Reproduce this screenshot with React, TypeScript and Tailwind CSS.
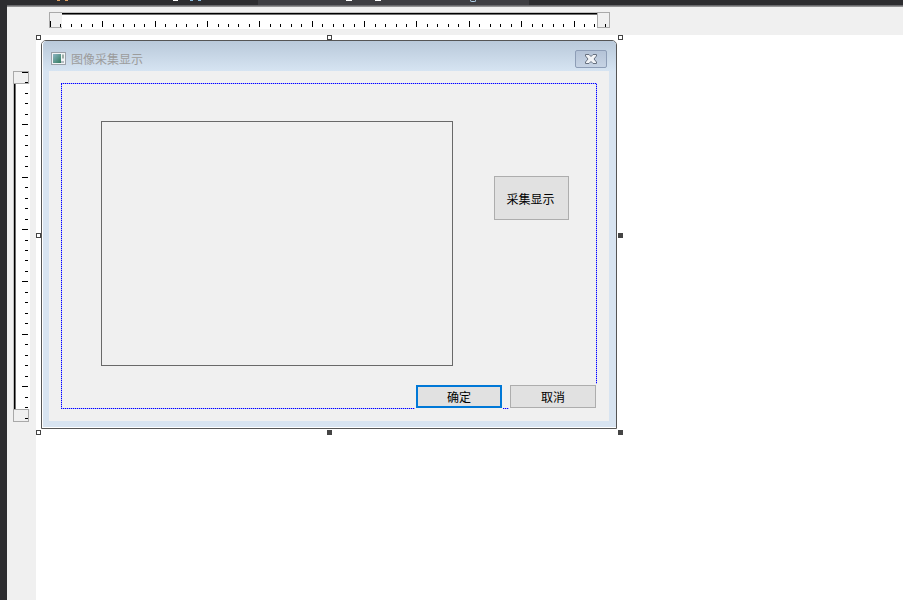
const FONT = "font-['Noto_Sans_CJK_SC','Noto_Sans',sans-serif]";

function HTicks() {
  const ticks = Array.from({ length: 54 }, (_, i) => i);
  return (
    <svg className="absolute left-0 top-0" width="561" height="17" shapeRendering="crispEdges">
      {ticks.map((i) => {
        const x = Math.round(1 + i * 10.47) + 0.5;
        return <line key={i} x1={x} x2={x} y1={i % 5 === 0 ? 9 : 12} y2={15} stroke="#000" strokeWidth="1" />;
      })}
    </svg>
  );
}

function VTicks() {
  const ticks = Array.from({ length: 34 }, (_, i) => i);
  return (
    <svg className="absolute left-0 top-0" width="17" height="351" shapeRendering="crispEdges">
      {ticks.map((i) => {
        const y = Math.round(1 + i * 10.47) + 0.5;
        return <line key={i} x1={i % 5 === 0 ? 9 : 12} x2={15} y1={y} y2={y} stroke="#000" strokeWidth="1" />;
      })}
    </svg>
  );
}

function TitleIcon() {
  return (
    <svg width="15" height="13" viewBox="0 0 15 13" className="mt-[11px] shrink-0">
      <defs>
        <linearGradient id="ti" x1="0" y1="0" x2="1" y2="1">
          <stop offset="0" stopColor="#8fb6c4" />
          <stop offset="1" stopColor="#2f7a5e" />
        </linearGradient>
      </defs>
      <rect x="0.5" y="0.5" width="14" height="12" fill="#f2f4f6" stroke="#9aa0a8" />
      <rect x="2" y="2" width="8" height="9" fill="url(#ti)" />
      <rect x="11.5" y="2.5" width="1" height="4" fill="#4a6a5a" />
      <rect x="10" y="9" width="3" height="2" fill="#b4bcc2" />
    </svg>
  );
}

function CloseIcon() {
  return (
    <svg width="14" height="12" viewBox="0 0 14 12">
      <path
        d="M1.5 1.5H5L7 3.5L9 1.5H12.5V3L10 6L12.5 9V10.5H9L7 8.5L5 10.5H1.5V9L4 6L1.5 3Z"
        fill="#f1f3f6"
        stroke="#66707f"
        strokeWidth="1"
      />
    </svg>
  );
}

export default function App() {
  return (
    <div className={`flex h-[600px] w-[903px] flex-col overflow-hidden bg-white ${FONT}`}>
      {/* top window bar */}
      <div className="relative flex h-[5px] shrink-0">
        <div className="w-[258px] bg-[#2d2d30]" />
        <div className="w-[271px] bg-[#3e3e42]" />
        <div className="flex-1 bg-[#2d2d30]" />
        <span className="absolute left-[57px] top-0 h-[1px] w-[3px] bg-[#e0a060]" />
        <span className="absolute left-[65px] top-0 h-[1px] w-[3px] bg-[#e0a060]" />
        <span className="absolute left-[173px] top-0 h-[1px] w-[5px] bg-white" />
        <span className="absolute left-[190px] top-0 h-[1px] w-[3px] bg-[#90c0e0]" />
        <span className="absolute left-[198px] top-0 h-[1px] w-[3px] bg-[#90c0e0]" />
        <span className="absolute left-[346px] top-0 h-[1px] w-[6px] bg-white" />
        <span className="absolute left-[375px] top-0 h-[1px] w-[6px] bg-white" />
        <span className="absolute left-[470px] top-0 h-[2px] w-[6px] rounded-b-full border-x border-b border-[#b0d0e8]" />
      </div>

      <div className="flex min-h-0 flex-1">
        <div className="w-[7px] shrink-0 bg-[#2d2d30]" />
        <div className="flex min-w-0 flex-1 flex-col">
          <div className="h-[2px] shrink-0 bg-gradient-to-b from-[#56565a] to-[#a8a8a8]" />

          {/* horizontal ruler strip */}
          <div className="h-[28px] shrink-0 bg-[#f0f0f0] pl-[42px] pt-[5px]">
            <div className="relative flex h-[17px] w-[561px]">
              <div className="h-[16px] w-[13px] border-y border-l border-[#a9a9a9] bg-[#f0f0f0]" />
              <div className="flex-1 border-t border-[#c0c0c0] bg-white">
                <div className="h-px bg-black" />
                <div className="h-px bg-[#707070]" />
              </div>
              <div className="h-[16px] w-[13px] border border-[#a9a9a9] bg-[#f0f0f0]" />
              <HTicks />
            </div>
          </div>

          <div className="flex min-h-0 flex-1">
            {/* vertical ruler column */}
            <div className="w-[29px] shrink-0 bg-[#f0f0f0] pl-[6px] pt-[36px]">
              <div className="relative flex h-[351px] w-[17px] flex-col">
                <div className="h-[13px] w-[16px] border border-[#a9a9a9] bg-[#f0f0f0]" />
                <div className="flex flex-1 bg-white">
                  <div className="w-px bg-[#c0c0c0]" />
                  <div className="w-px bg-black" />
                  <div className="w-px bg-[#707070]" />
                </div>
                <div className="h-[13px] w-[16px] border border-[#a9a9a9] bg-[#f0f0f0]" />
                <VTicks />
              </div>
            </div>

            {/* design canvas */}
            <div className="relative min-w-0 flex-1 bg-white pl-[5px] pt-[5px]">
              <div className="h-[389px] w-[576px] rounded-t-[5px] border border-[#555555]">
                <div className="flex h-full flex-col rounded-t-[4px] border-b border-l border-white bg-gradient-to-b from-[#b9c9da] to-[#d6e4f2] bg-[length:100%_30px] bg-no-repeat">
                  <div className="flex h-[30px] shrink-0 pl-2 pr-[9px]">
                    <TitleIcon />
                    <span className="ml-[5px] mt-[11px] text-[12px] leading-[14px] text-[#9c9c9c]">图像采集显示</span>
                    <button className="ml-auto mt-[9px] flex h-[18px] w-[32px] items-center justify-center rounded-[2px] border border-[#8d9db6] bg-gradient-to-b from-[#b4c3d7] to-[#c6d3e4]">
                      <CloseIcon />
                    </button>
                  </div>
                  <div className="min-h-0 flex-1 bg-[#d8e4f1] pb-[6px] pl-[6px] pr-[7px]">
                    <div className="h-full bg-[#f0f0f0] pl-3 pt-3">
                      <div className="flex h-[326px] w-[536px] flex-col p-px [background:repeating-linear-gradient(90deg,#00f_0_1px,#aaf_1px_2px)_0_0/100%_1px_no-repeat,repeating-linear-gradient(90deg,#00f_0_1px,#aaf_1px_2px)_0_100%/100%_1px_no-repeat,repeating-linear-gradient(0deg,#00f_0_1px,#aaf_1px_2px)_0_0/1px_100%_no-repeat,repeating-linear-gradient(0deg,#00f_0_1px,#aaf_1px_2px)_100%_0/1px_100%_no-repeat]">
                        <div className="flex items-start">
                          <div className="ml-[39px] mt-[37px] h-[245px] w-[352px] border border-[#696969] bg-[#f0f0f0]" />
                          <button className="ml-[41px] mt-[92px] h-[44px] w-[75px] border border-[#adadad] bg-[#e1e1e1] pr-[2px] pt-[2px] text-[12px] leading-none text-black">
                            采集显示
                          </button>
                        </div>
                        <div className="mt-auto flex justify-end gap-2">
                          <button className="h-[23px] w-[86px] border-2 border-[#0078d7] bg-[#e1e1e1] text-[12px] leading-none text-black shadow-[0_0_0_1px_#f0f0f0]">
                            确定
                          </button>
                          <button className="h-[23px] w-[86px] border border-[#adadad] bg-[#e1e1e1] text-[12px] leading-none text-black shadow-[0_0_0_1px_#f0f0f0]">
                            取消
                          </button>
                        </div>
                      </div>
                    </div>
                  </div>
                </div>
              </div>

              {/* selection handles */}
              <span className="absolute left-0 top-0 size-[5px] border border-[#444444] bg-white" />
              <span className="absolute left-[291px] top-0 size-[5px] border border-[#444444] bg-white" />
              <span className="absolute left-[582px] top-0 size-[5px] border border-[#444444] bg-white" />
              <span className="absolute left-0 top-[198px] size-[5px] border border-[#444444] bg-white" />
              <span className="absolute left-[582px] top-[198px] size-[5px] bg-[#444444]" />
              <span className="absolute left-0 top-[395px] size-[5px] border border-[#444444] bg-white" />
              <span className="absolute left-[291px] top-[395px] size-[5px] bg-[#444444]" />
              <span className="absolute left-[582px] top-[395px] size-[5px] bg-[#444444]" />
            </div>
          </div>
        </div>
      </div>
    </div>
  );
}
